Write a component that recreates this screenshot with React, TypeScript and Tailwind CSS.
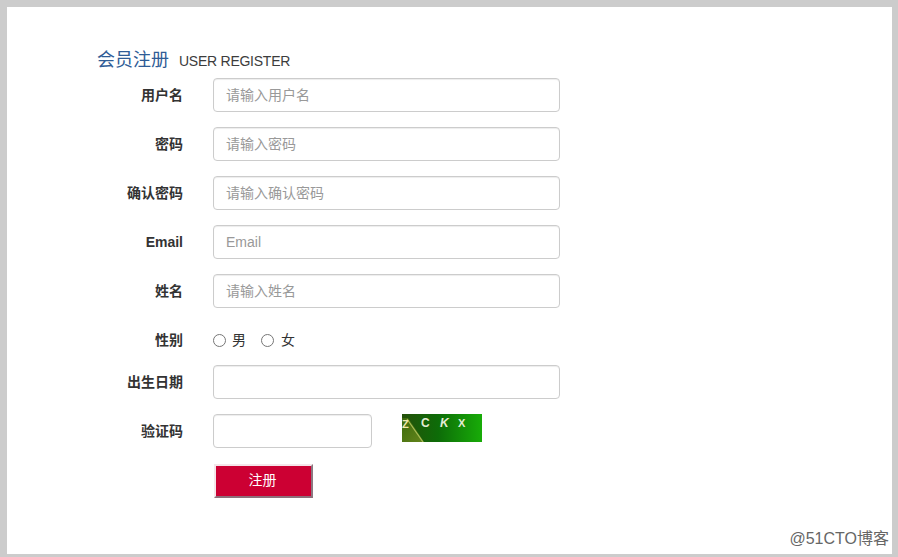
const FONT = "font-['Liberation_Sans','Noto_Sans_CJK_SC',sans-serif]";

function Label({ children }: { children: React.ReactNode }) {
  return (
    <label className="w-[106px] shrink-0 mr-[30px] text-right text-sm font-bold text-[#333] leading-5">
      {children}
    </label>
  );
}

function Field({ label, placeholder }: { label: string; placeholder?: string }) {
  return (
    <div className="flex items-center mb-[15px]">
      <Label>{label}</Label>
      <input
        type="text"
        placeholder={placeholder}
        className="w-[347px] h-[34px] pl-3 pr-3 rounded border border-[#ccc] bg-white text-sm text-[#555] shadow-[inset_0_1px_1px_rgba(0,0,0,0.075)] placeholder:text-[#999] outline-none"
      />
    </div>
  );
}

function Captcha() {
  return (
    <svg width="80" height="28" viewBox="0 0 80 28" className="ml-[30px] self-start block">
      <defs>
        <linearGradient id="cg" x1="0" y1="0" x2="1" y2="0">
          <stop offset="0" stopColor="#24500a" />
          <stop offset="0.45" stopColor="#0d6c08" />
          <stop offset="1" stopColor="#18ac08" />
        </linearGradient>
        <linearGradient id="wedge" x1="0" y1="0" x2="1" y2="1">
          <stop offset="0" stopColor="#3c6a0c" />
          <stop offset="1" stopColor="#64851c" />
        </linearGradient>
      </defs>
      <rect width="80" height="28" fill="url(#cg)" />
      <path d="M0 4 L6 4 L22 28 L0 28 Z" fill="url(#wedge)" />
      <path d="M5 5 L21 28" stroke="#a9bd58" strokeWidth="1.2" fill="none" />
      <g fontFamily="'Liberation Sans',sans-serif" fontWeight="700" fontSize="12" fill="#e4ecd4">
        <text x="0" y="14" fontSize="11" fill="#f0e8b0">Z</text>
        <text x="19" y="13">C</text>
        <text x="38" y="13" fontStyle="italic">K</text>
        <text x="56" y="13" fontSize="11">X</text>
      </g>
    </svg>
  );
}

export default function App() {
  return (
    <div className={`${FONT} relative w-[898px] h-[557px] bg-[#ccc] pt-[7px] pl-[7px] pr-[6px] pb-[3px] overflow-hidden`}>
      <div className="w-full h-full bg-white pl-[70px] pt-[38px]">
        <div className="flex items-baseline h-[33px] ml-[20px]">
          <span className="text-lg text-[#2f5c96] leading-[30px]">会员注册</span>
          <span className="ml-[10px] text-sm tracking-[-0.25px] text-[#3c3c3c]">USER REGISTER</span>
        </div>

        <Field label="用户名" placeholder="请输入用户名" />
        <Field label="密码" placeholder="请输入密码" />
        <Field label="确认密码" placeholder="请输入确认密码" />
        <Field label="Email" placeholder="Email" />
        <Field label="姓名" placeholder="请输入姓名" />

        <div className="flex items-center h-[27px] mb-[15px] pt-[7px]">
          <Label>性别</Label>
          <div className="flex items-center text-sm text-[#333]">
            <input type="radio" name="sex" className="m-0 w-[13px] h-[13px]" />
            <span className="ml-[6px]">男</span>
            <input type="radio" name="sex" className="m-0 ml-[15px] w-[13px] h-[13px]" />
            <span className="ml-[7px]">女</span>
          </div>
        </div>

        <Field label="出生日期" />

        <div className="flex items-center mb-4">
          <Label>验证码</Label>
          <input
            type="text"
            className="w-[159px] h-[34px] px-3 rounded border border-[#ccc] bg-white shadow-[inset_0_1px_1px_rgba(0,0,0,0.075)] outline-none"
          />
          <Captcha />
        </div>

        <div className="pl-[137px]">
          <button
            type="button"
            className="w-[99px] h-[34px] pr-[2px] pb-[2px] bg-[#cc0033] text-white text-sm border-2 border-t-[#f4e6ea] border-l-[#f4e6ea] border-r-[#8c7880] border-b-[#8c6f7a]"
          >
            注册
          </button>
        </div>
      </div>
      <span className="absolute right-[9px] bottom-[8px] text-base leading-5 text-[#666]">@51CTO博客</span>
    </div>
  );
}
